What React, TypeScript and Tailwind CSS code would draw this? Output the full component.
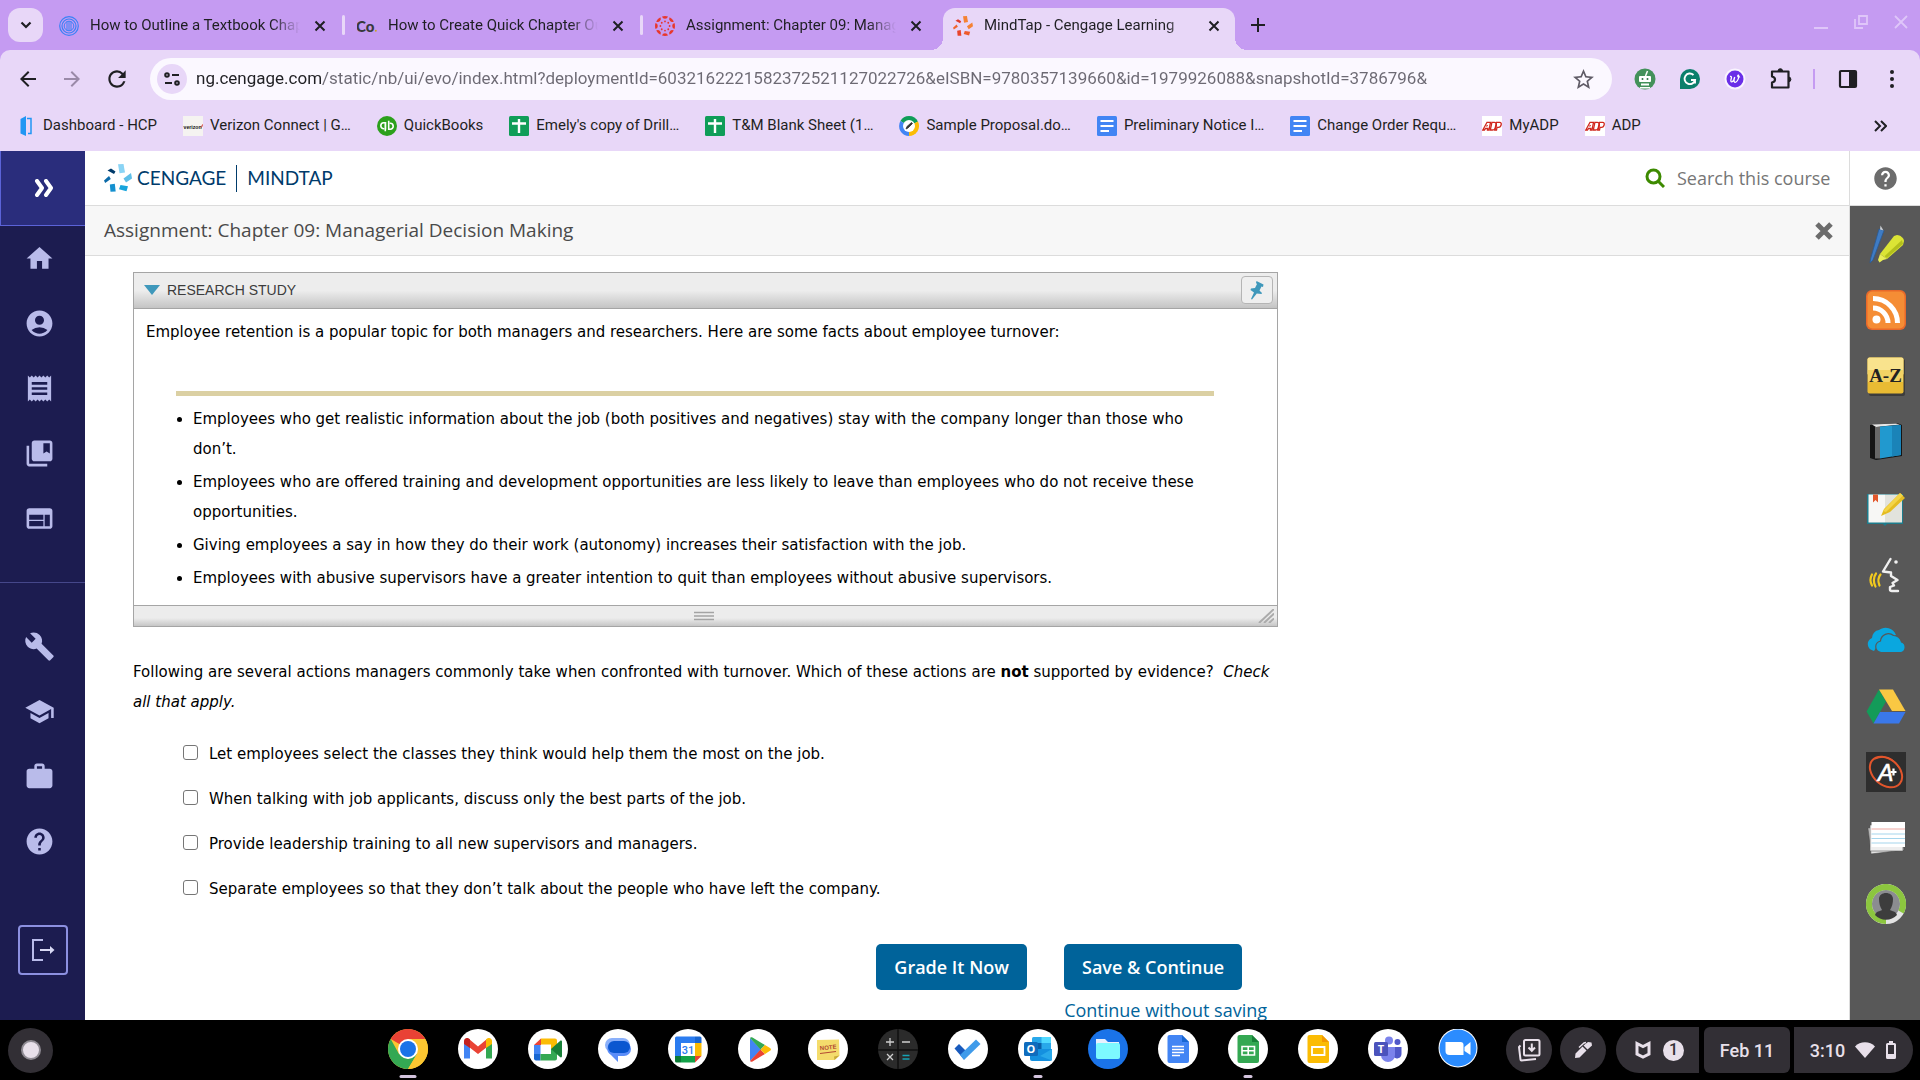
import type { ComponentType, ReactNode } from 'react'
import clsx from 'clsx'
import {
  MdAccountCircle,
  MdArrowBack,
  MdArrowForward,
  MdBuild,
  MdCollectionsBookmark,
  MdHelp,
  MdHome,
  MdReceipt,
  MdRefresh,
  MdSchool,
  MdStarBorder,
  MdWeb,
  MdWork,
} from 'react-icons/md'

interface TabInfo {
  title: string
  icon: ReactNode
  active?: boolean
}

interface Bookmark {
  label: string
  icon: ReactNode
}

interface NavItem {
  label: string
  icon: ComponentType<{ size?: number }>
}

interface AppItem {
  label: string
  icon: ReactNode
  running?: 'focused' | 'open'
}

const URL_TEXT =
  'ng.cengage.com/static/nb/ui/evo/index.html?deploymentId=6032162221582372521127022726&eISBN=9780357139660&id=1979926088&snapshotId=3786796&'

/* ---------- browser icons ---------- */

function OutlineFavicon() {
  return (
    <svg viewBox="0 0 20 20" className="size-5" fill="none" stroke="#3b82f6">
      <circle cx="10" cy="10" r="9.3" strokeWidth="1.2" />
      <circle cx="10" cy="10" r="7" strokeWidth="1.2" />
      <circle cx="10" cy="10" r="4.8" strokeWidth="1" />
      <path d="M8 5.5v9M10 5.2v9.6M12 5.5v9" strokeWidth="1" />
    </svg>
  )
}

function CoFavicon() {
  return (
    <svg viewBox="0 0 20 20" className="size-5">
      <text x="-1" y="15.5" fontFamily="Lato, sans-serif" fontWeight="900" fontSize="15" fill="#38393d">
        Co
      </text>
      <circle cx="18.8" cy="14.8" r="1" fill="#c9a227" />
    </svg>
  )
}

function CanvasFavicon() {
  const angles = [0, 45, 90, 135, 180, 225, 270, 315]
  return (
    <svg viewBox="-10 -10 20 20" className="size-5" fill="#e8372b">
      {angles.map((a) => (
        <g key={a} transform={`rotate(${a})`}>
          <path d="M-3-9.5A10 10 0 0 1 3-9.5A3.1 3.1 0 0 1-3-9.5Z" />
          <circle cx="0" cy="-4.6" r="0.9" />
        </g>
      ))}
    </svg>
  )
}

function CengageMark({ className, colors }: { className: string; colors: string[] }) {
  return (
    <svg viewBox="0 0 28 28" className={className}>
      <path d="M14 0.3l5.500-.3 1.500 8.500-5.500.8z" fill={colors[0]} />
      <path d="M27 9l1 5.500-6 4-2.500-4z" fill={colors[1]} />
      <path d="M16.500 21l7.500 1.200-1.500 5-7.500-2z" fill={colors[2]} />
      <path d="M5.800 20.500l5-.8.9 7.800-5.200.2z" fill={colors[3]} />
      <path d="M0 16.500l5-4.500 1.800 3-5.600 4z" fill={colors[4]} />
      <path d="M3.500 6.500l3.500-2 4.500 3-1.500 2.500z" fill={colors[5]} />
    </svg>
  )
}

function SheetsFavicon() {
  return (
    <svg viewBox="0 0 20 20" className="size-5">
      <rect width="20" height="20" rx="1.5" fill="#0f9d58" />
      <path d="M10 3v14M3 7.500h14" stroke="#fff" strokeWidth="2.400" />
    </svg>
  )
}

function DocsFavicon() {
  return (
    <svg viewBox="0 0 20 20" className="size-5">
      <rect width="20" height="20" rx="1.5" fill="#4285f4" />
      <path d="M3.500 5h13M3.500 10h13M3.500 15h8.500" stroke="#fff" strokeWidth="2" />
    </svg>
  )
}

function HcpFavicon() {
  return (
    <svg viewBox="0 0 20 20" className="size-5">
      <path d="M4.500 3l5.500-3v20l-5.500-2.500z" fill="#2196f3" />
      <path d="M11 2.500h4v15h-3" fill="none" stroke="#2196f3" strokeWidth="1.500" />
    </svg>
  )
}

function VerizonFavicon() {
  return (
    <svg viewBox="0 0 20 20" className="size-5">
      <rect width="20" height="20" fill="#f5f3f1" />
      <text x="0.5" y="12.500" fontFamily="Liberation Sans, sans-serif" fontWeight="700" fontSize="5.200" fill="#111">
        verizon
      </text>
      <path d="M18.500 11.500l1-3" stroke="#d52b1e" />
    </svg>
  )
}

function QuickBooksFavicon() {
  return (
    <svg viewBox="0 0 20 20" className="size-5" fill="none" stroke="#fff" strokeWidth="1.600">
      <circle cx="10" cy="10" r="10" fill="#2ca01c" stroke="none" />
      <path d="M8.500 13.500V6.800H6.800a3 3 0 0 0 0 6h.4M8.300 6.800v8.500" />
      <path d="M11.700 4.700v8.500h1.500a3 3 0 0 0 0-6h-.4" />
    </svg>
  )
}

function ProposalFavicon() {
  return (
    <svg viewBox="0 0 20 20" className="size-5">
      <path d="M10 0a10 10 0 0 1 9 5.600L10 10 1.400 5A10 10 0 0 1 10 0z" fill="#0f9d58" />
      <path d="M19 5.600A10 10 0 0 1 10 20V10z" fill="#fbbc05" />
      <path d="M1.400 5A10 10 0 0 0 10 20V10z" fill="#4285f4" />
      <circle cx="10" cy="10" r="6" fill="#fff" />
      <path d="M7 13l1-2.500 4.500-4 1 1-4.500 4.500z" fill="#333" stroke="#333" strokeWidth=".8" />
    </svg>
  )
}

function AdpFavicon() {
  return (
    <svg viewBox="0 0 20 20" className="size-5">
      <rect width="20" height="20" fill="#fff" />
      <g fill="none" stroke="#d0271d" strokeWidth="1.300">
        <path d="M.8 14L5 6.300h3.500L7 14H5.500l.3-1.500H3.500L2.500 14zM4.500 10.500l1-1.500" />
        <path d="M8.300 14l1.600-7.700h2.600c3.500 0 1.800 7.700-2 7.700z" />
        <path d="M12.800 14l1.600-7.700h3.300c2.600 0 1.700 5-1.200 5H15L14.500 14z" />
      </g>
    </svg>
  )
}

function RobotExtension() {
  return (
    <svg viewBox="0 0 22 22" className="size-[22px]">
      <circle cx="11" cy="11" r="10.500" fill="#43915a" />
      <path d="M11.500 8l2-5" stroke="#fff" strokeWidth="1.500" />
      <rect x="5" y="8" width="12" height="6" rx="1" fill="#fff" />
      <circle cx="8.500" cy="11" r="1" fill="#2f7344" />
      <circle cx="13.500" cy="11" r="1" fill="#2f7344" />
      <path d="M7 15.500h8v2H7zM6 19h10v1.500H6z" fill="#fff" />
    </svg>
  )
}

function GrammarlyExtension() {
  return (
    <svg viewBox="0 0 22 22" className="size-[22px]">
      <path d="M1 11a10 10 0 1 1 10 10H1z" fill="#0b7f6b" />
      <path d="M14.500 7A5.300 5.300 0 1 0 16 12h-4m4 0v3.500" fill="none" stroke="#fff" strokeWidth="1.900" />
    </svg>
  )
}

function WordtuneExtension() {
  return (
    <svg viewBox="0 0 22 22" className="size-[22px]">
      <circle cx="11" cy="11" r="10.500" fill="#f9f4ff" />
      <circle cx="11" cy="11" r="8.500" fill="#6a2ee8" />
      <path
        d="M6 8.500c2-.5 1.500 1.500 1 3-.8 3 1.500 3 2.700.5l1-3c-1.500 4.500-.3 6 1.300 5 2-1.200 3.500-5.500 2.500-6.800-1.300-.5-1 3 1.500 1.500"
        fill="none"
        stroke="#fff"
        strokeWidth="1.300"
      />
    </svg>
  )
}

function PuzzleIcon() {
  return (
    <svg viewBox="0 0 24 24" className="size-6" fill="none" stroke="#1f1f23" strokeWidth="2.200" strokeLinejoin="round">
      <path d="M3 4.500h16.500V20.500H3v-5c4-.8 4-5.200 0-6z" />
      <path d="M9 4a2.300 2.300 0 0 1 4.600 0zM19.500 10a2.400 2.400 0 0 1 0 4.800z" fill="#1f1f23" strokeWidth="1" />
    </svg>
  )
}

const tabs: TabInfo[] = [
  { title: 'How to Outline a Textbook Chapter', icon: <OutlineFavicon /> },
  { title: 'How to Create Quick Chapter Outlines', icon: <CoFavicon /> },
  { title: 'Assignment: Chapter 09: Managerial', icon: <CanvasFavicon /> },
  {
    title: 'MindTap - Cengage Learning',
    icon: (
      <CengageMark className="size-5" colors={['#f58233', '#f58233', '#ee5a2b', '#e8452c', '#f0642e', '#e03a2a']} />
    ),
    active: true,
  },
]

const bookmarks: Bookmark[] = [
  { label: 'Dashboard - HCP', icon: <HcpFavicon /> },
  { label: 'Verizon Connect | G…', icon: <VerizonFavicon /> },
  { label: 'QuickBooks', icon: <QuickBooksFavicon /> },
  { label: "Emely's copy of Drill…", icon: <SheetsFavicon /> },
  { label: 'T&M Blank Sheet (1…', icon: <SheetsFavicon /> },
  { label: 'Sample Proposal.do…', icon: <ProposalFavicon /> },
  { label: 'Preliminary Notice I…', icon: <DocsFavicon /> },
  { label: 'Change Order Requ…', icon: <DocsFavicon /> },
  { label: 'MyADP', icon: <AdpFavicon /> },
  { label: 'ADP', icon: <AdpFavicon /> },
]

function Tab({ title, icon, active }: TabInfo) {
  return (
    <div className="relative w-[298px] px-[3px]">
      <div
        className={clsx(
          'flex h-full items-center pr-[11px] pb-[7px] pl-[10px]',
          active && 'rounded-t-xl bg-[#e8d7f8]',
        )}
      >
        <button type="button" role="tab" aria-selected={!!active} className="flex min-w-0 flex-1 items-center gap-[11px]">
          <span className="shrink-0">{icon}</span>
          <span className="min-w-0 flex-1 overflow-hidden text-left whitespace-nowrap [mask-image:linear-gradient(90deg,#000_calc(100%-28px),transparent)]">
            {title}
          </span>
        </button>
        <button type="button" aria-label={`Close ${title}`} className="ml-[10px] flex size-5 items-center justify-center">
          <svg viewBox="0 0 12 12" className="size-3" stroke="#1f1f23" strokeWidth="2">
            <path d="M1.500 1.500l9 9M10.500 1.500l-9 9" />
          </svg>
        </button>
      </div>
      {active && (
        <>
          <span className="absolute bottom-0 -left-[9px] size-3 bg-[radial-gradient(circle_at_0_0,transparent_12px,#e8d7f8_12px)]" />
          <span className="absolute -right-[9px] bottom-0 size-3 bg-[radial-gradient(circle_at_100%_0,transparent_12px,#e8d7f8_12px)]" />
        </>
      )}
    </div>
  )
}

function TabStrip() {
  return (
    <div className="flex h-[50px] bg-[#c59bf2] pt-2 text-[15px] text-[#1f1f23]">
      <button
        type="button"
        aria-label="Search tabs"
        className="ml-2 flex h-[34px] w-[35px] items-center justify-center rounded-xl bg-[#e8d7f8]"
      >
        <svg viewBox="0 0 12 12" className="size-3" fill="none" stroke="#1f1f23" strokeWidth="2.200">
          <path d="M1.500 3.500L6 8l4.500-4.500" />
        </svg>
      </button>
      <div role="tablist" className="ml-[3px] flex">
        {tabs.map((tab, i) => (
          <div key={tab.title} className="relative flex">
            <Tab {...tab} />
            {i < 2 && <span className="absolute top-[7px] -right-px h-5 w-[3px] rounded-sm bg-[#e8d7f8]" />}
          </div>
        ))}
      </div>
      <button type="button" aria-label="New tab" className="ml-2 flex h-[34px] w-6 items-center justify-center">
        <svg viewBox="0 0 14 14" className="size-[14px]" stroke="#1f1f23" strokeWidth="2">
          <path d="M7 0v14M0 7h14" />
        </svg>
      </button>
      <div className="mr-3 ml-auto flex h-7 items-center gap-[26px]">
        <button type="button" aria-label="Minimize">
          <svg viewBox="0 0 14 14" className="size-[14px]" stroke="#dfc6f9" strokeWidth="2">
            <path d="M0 13h14" />
          </svg>
        </button>
        <button type="button" aria-label="Restore">
          <svg viewBox="0 0 14 14" className="size-[14px]" fill="none" stroke="#dfc6f9" strokeWidth="1.800">
            <path d="M5 1h8v8H5zM1 4v9h8" />
          </svg>
        </button>
        <button type="button" aria-label="Close window">
          <svg viewBox="0 0 14 14" className="size-[14px]" stroke="#dfc6f9" strokeWidth="1.800">
            <path d="M1 1l12 12M13 1L1 13" />
          </svg>
        </button>
      </div>
    </div>
  )
}

function Toolbar() {
  return (
    <div className="bg-[#c59bf2] text-[#1f1f23]">
      <div className="flex h-[101px] flex-col rounded-t-[10px] bg-[#e8d7f8]">
        <div className="flex items-center pt-2 pr-4 pl-4">
          <button type="button" aria-label="Back" className="mr-5">
            <MdArrowBack size={24} />
          </button>
          <button type="button" aria-label="Forward" className="mr-5 text-[#9a8aa8]">
            <MdArrowForward size={24} />
          </button>
          <button type="button" aria-label="Reload" className="mr-5">
            <MdRefresh size={26} />
          </button>
          <div className="flex h-[42px] flex-1 items-center rounded-full bg-[#fbf8ff] pl-[7px]">
            <button
              type="button"
              aria-label="Site information"
              className="flex size-[30px] shrink-0 items-center justify-center rounded-full bg-[#e8d7f8]"
            >
              <svg viewBox="0 0 16 14" className="h-[14px] w-4" fill="none" stroke="#1f1f23" strokeWidth="2">
                <circle cx="3" cy="3" r="1.800" />
                <path d="M8 3h7M1 11h7" />
                <circle cx="13" cy="11" r="1.800" />
              </svg>
            </button>
            <input
              aria-label="Address"
              defaultValue={URL_TEXT}
              className="ml-[9px] min-w-0 flex-1 bg-[linear-gradient(90deg,#1f1f23_126px,#6c6973_126px)] bg-clip-text text-[17px] text-transparent outline-none"
            />
            <button type="button" aria-label="Bookmark this tab" className="mr-4 text-[#5f5b66]">
              <MdStarBorder size={25} />
            </button>
          </div>
          <div className="ml-[22px] flex items-center gap-[23px]">
            <RobotExtension />
            <GrammarlyExtension />
            <WordtuneExtension />
            <PuzzleIcon />
          </div>
          <span className="ml-5 h-5 w-[2px] bg-[#c59bf2]" />
          <button type="button" aria-label="Side panel" className="ml-[23px]">
            <svg viewBox="0 0 20 20" className="size-5">
              <rect x="2" y="2" width="16" height="16" rx="1" fill="none" stroke="#1f1f23" strokeWidth="2.200" />
              <path d="M11 2h7v16h-7z" fill="#1f1f23" />
            </svg>
          </button>
          <button type="button" aria-label="Menu" className="ml-[22px]">
            <svg viewBox="0 0 24 20" className="h-5 w-6" fill="#1f1f23">
              <circle cx="12" cy="3" r="2" />
              <circle cx="12" cy="10" r="2" />
              <circle cx="12" cy="17" r="2" />
            </svg>
          </button>
        </div>
        <div className="flex flex-1 items-center gap-[26px] pr-[33px] pl-4 text-[15px] whitespace-nowrap">
          {bookmarks.map((b) => (
            <a key={b.label} href="#" className="flex items-center gap-[7px]">
              {b.icon}
              {b.label}
            </a>
          ))}
          <button type="button" aria-label="More bookmarks" className="ml-auto">
            <svg viewBox="0 0 14 12" className="h-3 w-[14px]" fill="none" stroke="#1f1f23" strokeWidth="2">
              <path d="M2 1l5 5-5 5M8 1l5 5-5 5" />
            </svg>
          </button>
        </div>
      </div>
    </div>
  )
}

/* ---------- course navigation ---------- */

const courseNav: NavItem[] = [
  { label: 'Home', icon: MdHome },
  { label: 'Account', icon: MdAccountCircle },
  { label: 'Orders', icon: MdReceipt },
  { label: 'Library', icon: MdCollectionsBookmark },
  { label: 'Catalog', icon: MdWeb },
]

const supportNav: NavItem[] = [
  { label: 'Study tools', icon: MdBuild },
  { label: 'College success', icon: MdSchool },
  { label: 'Career center', icon: MdWork },
  { label: 'Help', icon: MdHelp },
]

function NavGroup({ items }: { items: NavItem[] }) {
  return (
    <ul className="flex flex-col gap-[34px] pr-[6px]">
      {items.map(({ label, icon: Icon }) => (
        <li key={label} className="flex justify-center">
          <button type="button" aria-label={label}>
            <Icon size={31} />
          </button>
        </li>
      ))}
    </ul>
  )
}

function Sidebar() {
  return (
    <nav className="flex w-[85px] shrink-0 flex-col bg-[#1c1c50] text-[#b9bbea]">
      <button
        type="button"
        aria-label="Expand navigation"
        className="flex h-[75px] shrink-0 items-center justify-center border-b border-l border-[#5b63d8] bg-[#2a2d7c] pl-[2px]"
      >
        <svg
          viewBox="0 0 20 18"
          className="h-[18px] w-5"
          fill="none"
          stroke="#fff"
          strokeWidth="4"
          strokeLinecap="round"
          strokeLinejoin="round"
        >
          <path d="M3 2l5 7-5 7M12 2l5 7-5 7" />
        </svg>
      </button>
      <div className="border-b border-[#45478a] pt-[17px] pb-12">
        <NavGroup items={courseNav} />
      </div>
      <div className="pt-12">
        <NavGroup items={supportNav} />
      </div>
      <button
        type="button"
        aria-label="Sign out"
        className="mt-[68px] ml-[18px] flex size-[50px] items-center justify-center rounded border-2 border-[#8c90e0]"
      >
        <svg viewBox="0 0 24 24" className="size-6" fill="none" stroke="#d9daf6" strokeWidth="2">
          <path d="M12 2H2v20h10" stroke="#b9bbea" />
          <path d="M9 12h11" />
          <path d="M19 8l4.500 4-4.500 4z" fill="#d9daf6" stroke="none" />
        </svg>
      </button>
    </nav>
  )
}

/* ---------- study tools on the right edge ---------- */

const studyTools: { label: string; art: ReactNode }[] = [
  {
    label: 'Highlights and notes',
    art: (
      <>
        <path d="M13 5l5 1.500L7 36l-3 3 .500-4z" fill="#3f7cc4" stroke="#2a5a96" strokeWidth=".8" />
        <path d="M14.500 1.500l3 5-3.500-1z" fill="#c9cdd2" />
        <path d="M31 11c3 0 7 3 7 6l-1 4-16 14-7-5 14-18z" fill="#dbe435" />
        <path d="M37 20L21 34l-2.500-1.800L36 16z" fill="#b3bf1c" />
        <path d="M14 30l7 5-4 1-3.500 2.500L12 36z" fill="#e9ee55" />
      </>
    ),
  },
  {
    label: 'RSS feed',
    art: (
      <>
        <rect width="40" height="40" rx="6" fill="#e8692a" />
        <rect x="1.500" y="1.500" width="37" height="37" rx="5" fill="#f58d35" />
        <circle cx="10.500" cy="29.500" r="4" fill="#fff" />
        <path d="M7 18a15 15 0 0 1 15 15M7 8.500A24.500 24.500 0 0 1 31.500 33" fill="none" stroke="#fff" strokeWidth="5" />
      </>
    ),
  },
  {
    label: 'Glossary',
    art: (
      <>
        <rect x="3" y="3" width="36" height="37" rx="2" fill="#3c3c3c" />
        <rect x="1.500" y="1.500" width="36" height="36" rx="2" fill="#e9bb33" />
        <rect x="1.500" y="1.500" width="36" height="18" rx="2" fill="#f9e38d" />
        <rect x="2" y="14" width="35" height="12" fill="#f3d364" />
        <text x="19.500" y="26" textAnchor="middle" fontFamily="Liberation Serif, serif" fontWeight="700" fontSize="19" fill="#222">
          A-Z
        </text>
      </>
    ),
  },
  {
    label: 'Book',
    art: (
      <>
        <path d="M4 3l27-2 5 2v31l-26 4-6-2z" fill="#151515" />
        <path d="M6 2.500l24-1 4 1-24 2.500z" fill="#e8e8e8" />
        <path d="M9 5h5v31.500H9z" fill="#686868" />
        <path d="M14 4.500l21-1.500v30l-21 3.500z" fill="#2199cf" />
        <path d="M26 3.700l9-.7v30l-9 1.500z" fill="#1a83b8" />
      </>
    ),
  },
  {
    label: 'Reader notebook',
    art: (
      <>
        <path d="M1 6h36v30H21l-2 2-2-2H1z" fill="#1d7c8c" />
        <path d="M2.500 6.500H19v28H2.500z" fill="#f7f7f5" />
        <path d="M19 6.500h17v28H19z" fill="#e2e3dd" />
        <path d="M7 6.500h5v8L9.500 12 7 14.500z" fill="#e2572b" />
        <path d="M34 5l5 5-15 14-9 4 3-7z" fill="#e5bd22" />
        <path d="M34 5l3 2.500L20 24l-3-1z" fill="#f4d548" />
      </>
    ),
  },
  {
    label: 'Read aloud',
    art: (
      <g fill="none" strokeLinecap="round" strokeLinejoin="round">
        <path d="M24.500 5L17 17.500l8 1v3.500l6.500 4-5 3 1.500 2.500-4 1.500v2.500c0 1 1 1.500 2 1.500h6" stroke="#f0f0f0" strokeWidth="2.400" />
        <circle cx="30" cy="8" r="1.800" fill="#f0f0f0" />
        <path d="M14.500 20.500c-2.500 3-2.500 7.500-1 11M10 19.500c-3 4-2.500 9.500-.5 13M6 20.500c-2 3.500-2 7.500 0 11" stroke="#f2c91e" strokeWidth="2.200" />
      </g>
    ),
  },
  {
    label: 'OneDrive',
    art: (
      <g fill="#0aa7df">
        <path d="M8 31a8 7 0 0 1-2-13 8 8 0 0 1 7-8 11 11 0 0 1 17 5l-14 3z" />
        <path
          d="M15 32.500a7 6 0 0 1-.500-11.500 8 8 0 0 1 13-5.500 8 8 0 0 1 8 6.500 5.500 5.500 0 0 1-.5 10.500z"
          stroke="#585858"
          strokeWidth="1.200"
        />
      </g>
    ),
  },
  {
    label: 'Google Drive',
    art: (
      <>
        <path d="M13 3.500L.5 25.500 7.500 37.500 20 15.500z" fill="#139b59" />
        <path d="M13 3.500h14L39.500 25H26z" fill="#f9c843" />
        <path d="M14 26h25.500L33 37.500H7.500z" fill="#3a78ea" />
      </>
    ),
  },
  {
    label: 'Progress',
    art: (
      <>
        <rect width="40" height="40" fill="#2e2e2e" />
        <g fill="none" stroke="#e2552c" strokeWidth="2">
          <ellipse cx="20" cy="20" rx="18" ry="13" transform="rotate(40 20 20)" />
          <path d="M9 7c8-4 18-2 24 9" strokeWidth="1.200" />
        </g>
        <text x="12" y="29" fontFamily="Liberation Sans, sans-serif" fontSize="23" fontStyle="italic" fill="#fff" stroke="#fff" strokeWidth=".6">
          A
        </text>
        <path d="M24.500 20h6M27.500 16.500v7" stroke="#fff" strokeWidth="2.200" />
      </>
    ),
  },
  {
    label: 'Flashcards',
    art: (
      <>
        <path d="M2 10l32-4 4 26L5 36z" fill="#e2e2e2" stroke="#444" strokeWidth=".6" />
        <path d="M4 7h33v26H4z" fill="#eee" stroke="#555" strokeWidth=".6" />
        <path d="M5.500 4H39v25H5.500z" fill="#fff" />
        <path d="M5.500 11H39" stroke="#efa8a2" />
        <path d="M5.500 16H39M5.500 20.500H39M5.500 25H39" stroke="#a5d5ec" />
      </>
    ),
  },
  {
    label: 'Tutoring',
    art: (
      <>
        <circle cx="20" cy="20" r="17" fill="#8b8c90" stroke="#e4e4e4" strokeWidth="6" />
        <path d="M20 37A17 17 0 1 1 35 28" fill="none" stroke="#8cc63f" strokeWidth="6" />
        <path d="M9 31c1-4 5-3.500 7-5-2-3-3-7-3-11 0-8 14-8 14 0 0 4-1 8-3 11 2 1.500 6 1 7 5a15 15 0 0 1-22 0z" fill="#3d3d3d" />
      </>
    ),
  },
]

function StudyToolRail() {
  return (
    <aside className="flex w-[71px] shrink-0 flex-col border-l border-[#dcdcdc] bg-[#585858]">
      <div className="flex h-[55px] shrink-0 items-center justify-center border-b border-[#dcdcdc] bg-white">
        <button type="button" aria-label="Help" className="text-[#6c6c6c]">
          <MdHelp size={27} />
        </button>
      </div>
      <div className="flex flex-col items-center gap-[26px] pt-[18px] pl-[2px]">
        {studyTools.map((tool) => (
          <button key={tool.label} type="button" aria-label={tool.label}>
            <svg viewBox="0 0 40 40" className="size-10">
              {tool.art}
            </svg>
          </button>
        ))}
      </div>
    </aside>
  )
}

/* ---------- assignment ---------- */

const facts = [
  'Employees who get realistic information about the job (both positives and negatives) stay with the company longer than those who don’t.',
  'Employees who are offered training and development opportunities are less likely to leave than employees who do not receive these opportunities.',
  'Giving employees a say in how they do their work (autonomy) increases their satisfaction with the job.',
  'Employees with abusive supervisors have a greater intention to quit than employees without abusive supervisors.',
]

const choices = [
  'Let employees select the classes they think would help them the most on the job.',
  'When talking with job applicants, discuss only the best parts of the job.',
  'Provide leadership training to all new supervisors and managers.',
  'Separate employees so that they don’t talk about the people who have left the company.',
]

function CourseHeader() {
  return (
    <header className="flex h-[55px] shrink-0 items-center border-b border-[#dcdcdc] pr-[14px] pl-[19px]">
      <CengageMark className="size-7" colors={['#8ad4f5', '#5fbfe8', '#16a4dc', '#1490cf', '#0b6aa8', '#003a6b']} />
      <a href="#" className="ml-[5px] flex items-center text-[19px] text-[#003b6b] [font-family:Lato,sans-serif]">
        CENGAGE
        <span className="mx-[10px] h-[27px] w-px bg-[#003b6b]" />
        MINDTAP
      </a>
      <label className="ml-auto flex items-center gap-3">
        <svg viewBox="0 0 20 20" className="size-5" fill="none" stroke="#3d8a00" strokeWidth="3">
          <circle cx="8.500" cy="8.500" r="6.500" />
          <path d="M13 13l6 6" />
        </svg>
        <input
          type="text"
          aria-label="Search this course"
          placeholder="Search this course"
          className="w-[158px] text-lg outline-none placeholder:text-[#767676]"
        />
      </label>
    </header>
  )
}

function ResearchStudy() {
  return (
    <section className="border border-[#a5a5a5]">
      <div className="flex h-9 items-center border-b border-[#a5a5a5] bg-[linear-gradient(#ededed_50%,#c4c4c4)] pr-1 pb-[2px] pl-[10px]">
        <button
          type="button"
          className="flex items-center gap-[7px] text-sm text-[#3c3c3c] [font-family:'Liberation_Sans',Arial,sans-serif]"
        >
          <svg viewBox="0 0 16 10" className="h-[10px] w-4" fill="#3f98bb">
            <path d="M0 0h16L8 10z" />
          </svg>
          RESEARCH STUDY
        </button>
        <button
          type="button"
          aria-label="Pin panel"
          className="ml-auto flex h-7 w-8 items-center justify-center rounded border border-[#b5b5b5] bg-[#efefef]"
        >
          <svg viewBox="0 0 14 20" className="h-5 w-[14px]" fill="#3f98bb">
            <path d="M6.500 1l7 3.500-.5 2.500-1.500-.500-2 4 2.500 2.500-.5 1-4.700-.5L2 19.500l-1-.5 3-6.500L.5 10 1 8.500l4-.500 2-4L6 3z" />
          </svg>
        </button>
      </div>
      <div className="pt-2 pr-3 pb-3 pl-3">
        <p>Employee retention is a popular topic for both managers and researchers. Here are some facts about employee turnover:</p>
        <div className="mt-11 mr-[51px] ml-[30px] border-t-[5px] border-[#dbd0a3] pt-2">
          <ul className="flex list-disc flex-col gap-[3px] pl-[17px]">
            {facts.map((fact) => (
              <li key={fact}>{fact}</li>
            ))}
          </ul>
        </div>
      </div>
      <div className="grid h-[21px] grid-cols-[1fr_auto_1fr] items-center border-t border-[#a5a5a5] bg-[linear-gradient(#ececec_60%,#c6c6c6)] pr-[3px]">
        <span />
        <svg viewBox="0 0 20 10" className="h-[10px] w-5" stroke="#a3a3a3" strokeWidth="1.500">
          <path d="M0 1.500h20M0 5h20M0 8.500h20" />
        </svg>
        <svg viewBox="0 0 16 14" className="h-[14px] w-4 justify-self-end" stroke="#ababab" strokeWidth="2">
          <path d="M1 14L16 0M6 14l10-9.500M11 14l5-4.500" />
        </svg>
      </div>
    </section>
  )
}

function Question() {
  return (
    <form className="w-[1145px] max-w-full" onSubmit={(e) => e.preventDefault()}>
      <ResearchStudy />
      <fieldset className="pt-[30px]">
        <legend className="float-left mb-[22px]">
          Following are several actions managers commonly take when confronted with turnover. Which of these actions are{' '}
          <b>not</b> supported by evidence?&nbsp; <i>Check all that apply.</i>
        </legend>
        <div className="clear-both flex flex-col gap-[15px] pl-[50px]">
          {choices.map((choice) => (
            <label key={choice} className="flex items-center gap-[11px]">
              <input
                type="checkbox"
                className="mb-1 size-[15px] appearance-none rounded-[3px] border border-[#767676] bg-white"
              />
              {choice}
            </label>
          ))}
        </div>
      </fieldset>
      <div className="mt-10 mr-[11px] flex items-start justify-end gap-[37px] text-lg leading-[30px] [font-family:'Open_Sans',sans-serif]">
        <button type="submit" className="h-[46px] w-[151px] rounded-[5px] bg-[#00639a] font-semibold text-white">
          Grade It Now
        </button>
        <div className="flex flex-col items-start">
          <button type="button" className="h-[46px] w-[178px] rounded-[5px] bg-[#00639a] font-semibold text-white">
            Save &amp; Continue
          </button>
          <a href="#" className="mt-[5px] text-[#00639a]">
            Continue without saving
          </a>
        </div>
      </div>
    </form>
  )
}

function Assignment() {
  return (
    <main className="flex min-w-0 flex-1 flex-col overflow-hidden bg-white [font-family:'Open_Sans',sans-serif]">
      <CourseHeader />
      <div className="flex h-[50px] shrink-0 items-center justify-between border-b border-[#dcdcdc] bg-[#f7f7f7] pr-4 pl-[19px]">
        <h1 className="text-[19px] text-[#4a4a4a]">Assignment: Chapter 09: Managerial Decision Making</h1>
        <button type="button" aria-label="Close assignment">
          <svg viewBox="0 0 18 18" className="size-[18px]" stroke="#6c6c6c" strokeWidth="5">
            <path d="M2 2l14 14M16 2L2 16" />
          </svg>
        </button>
      </div>
      <div className="pt-4 pl-12 text-[15px] leading-[30px] text-black [font-family:Verdana,'DejaVu_Sans',sans-serif]">
        <Question />
      </div>
    </main>
  )
}

/* ---------- shelf ---------- */

const white = <circle cx="20" cy="20" r="20" fill="#fff" />

const shelfApps: AppItem[] = [
  {
    label: 'Chrome',
    running: 'focused',
    icon: (
      <>
        <circle cx="20" cy="20" r="20" fill="#fbc631" />
        <path d="M20 20L2.700 10A20 20 0 0 1 37.300 10z" fill="#e94235" />
        <path d="M2.700 10A20 20 0 0 0 20 40l9-15-9 5-9-5z" fill="#34a853" />
        <path d="M37.300 10H20v10l9 5-9 15A20 20 0 0 0 37.300 10z" fill="#fbc631" />
        <circle cx="20" cy="20" r="10" fill="#fff" />
        <circle cx="20" cy="20" r="8" fill="#1a73e8" />
      </>
    ),
  },
  {
    label: 'Gmail',
    icon: (
      <>
        {white}
        <path d="M6 13v16.500h6V15z" fill="#4285f4" />
        <path d="M28 15v14.500h6V13z" fill="#34a853" />
        <path d="M11 10l9 7.500 9-7.500v8l-9 7-9-7z" fill="#ea4335" />
        <path d="M28 10.500c3-3 6-1 6 1.500v3l-6 4z" fill="#fbbc04" />
        <path d="M12 10.500c-3-3-6-1-6 1.500v3l6 4z" fill="#c5221f" />
      </>
    ),
  },
  {
    label: 'Meet',
    icon: (
      <>
        {white}
        <path d="M6 16l7-6.500V16z" fill="#ea4335" />
        <path d="M6 16h6.500v9H6z" fill="#4285f4" />
        <path d="M6 25h6.500v6.500H8a2 2 0 0 1-2-2z" fill="#1967d2" />
        <path d="M13 9.500h14a2 2 0 0 1 2 2V20h-6v-4.500H13z" fill="#fbbc04" />
        <path d="M12.500 25H23v-5h6v9.500a2 2 0 0 1-2 2H12.500z" fill="#34a853" />
        <path d="M23 20l9-8c1-.8 2-.3 2 1v14c0 1.300-1 1.800-2 1z" fill="#188038" />
      </>
    ),
  },
  {
    label: 'Messages',
    icon: (
      <>
        {white}
        <path d="M14 9h11a7 7 0 0 1 0 14H14A7 7 0 0 1 14 9z" fill="#8ab0fa" />
        <path d="M15 13h11a7 7 0 0 1 0 14h-6v6l-7-7a7 7 0 0 1 2-13z" fill="#5b8df8" />
        <rect x="10" y="12" width="22" height="12" rx="6" fill="#0b57d0" />
      </>
    ),
  },
  {
    label: 'Calendar',
    icon: (
      <>
        {white}
        <path d="M7 9a1.500 1.500 0 0 1 1.500-1.500H27v6.500H13v14H7z" fill="#2b7cf0" />
        <path d="M27 7.500h5A1.500 1.500 0 0 1 33.500 9v5H27z" fill="#1967d2" />
        <path d="M27 14h6.500v13H27z" fill="#fbbc04" />
        <path d="M13 27h14v6.500H13z" fill="#12a148" />
        <path d="M7 27h6v6.500H8.500A1.500 1.500 0 0 1 7 32z" fill="#0b7a35" />
        <path d="M27 27h6.500L27 33.500z" fill="#ea4335" />
        <text x="20" y="25" textAnchor="middle" fontFamily="Roboto, sans-serif" fontWeight="500" fontSize="11" fill="#2b7cf0">
          31
        </text>
      </>
    ),
  },
  {
    label: 'Play Store',
    icon: (
      <>
        {white}
        <path d="M12 9v23l11-11.500z" fill="#4285f4" />
        <path d="M12 9c.5-1 1.500-1 2.500-.4L27 16l-4.500 4.500z" fill="#34a853" />
        <path d="M12 32c.5 1 1.500 1 2.500.4L27 25l-4.500-4.500z" fill="#ea4335" />
        <path d="M27 16l5 3c1.300.8 1.300 2 0 2.800L27 25l-4.500-4.500z" fill="#fbbc04" />
      </>
    ),
  },
  {
    label: 'Notes',
    icon: (
      <>
        {white}
        <path d="M9 11l22-.5.5 16-5 4.500H9z" fill="#f4dc6c" />
        <path d="M31.500 26.500l-5 4.500-.5-3.500z" fill="#c9ab35" />
        <text x="12" y="20.500" fontFamily="Liberation Sans, sans-serif" fontWeight="700" fontSize="6" fill="#b34a32" transform="rotate(-6 20 20)">
          NOTE
        </text>
        <path d="M12 24.500l16-2" stroke="#b34a32" />
      </>
    ),
  },
  {
    label: 'Calculator',
    icon: (
      <>
        <circle cx="20" cy="20" r="20" fill="#2b2b2b" />
        <path d="M20 0v40M0 21h40" stroke="#111" strokeWidth="1.500" />
        <g stroke="#cfcfcf" strokeWidth="1.300">
          <path d="M8 13h8M12 9v8M24 13h8M9 25l6 6M15 25l-6 6" />
        </g>
        <path d="M24.500 26.500h7M24.500 30h7" stroke="#16a3b5" strokeWidth="1.500" />
      </>
    ),
  },
  {
    label: 'To Do',
    icon: (
      <>
        {white}
        <path d="M6.500 19.500l4.500-4.500 9 9-4 6.500z" fill="#185abd" />
        <path d="M28 10.500l4.500 4.500L16 31l-4-5z" fill="#3f9bea" />
      </>
    ),
  },
  {
    label: 'Outlook',
    running: 'open',
    icon: (
      <>
        {white}
        <rect x="14" y="8" width="19" height="18" rx="1.500" fill="#28a8ea" />
        <path d="M14 14h9.500v6H14z" fill="#0a5ea8" />
        <path d="M23.500 8H33v6h-9.500z" fill="#50d9ff" />
        <path d="M12 20l22 0v10a2 2 0 0 1-2 2H14a2 2 0 0 1-2-2z" fill="#1490df" />
        <path d="M34 20L22 27l12 4.500z" fill="#28a8ea" />
        <rect x="6" y="13" width="14" height="14" rx="1.500" fill="#0f6cbd" />
        <text x="13" y="24" textAnchor="middle" fontFamily="Open Sans, sans-serif" fontWeight="700" fontSize="11" fill="#fff">
          O
        </text>
      </>
    ),
  },
  {
    label: 'Files',
    icon: (
      <>
        <circle cx="20" cy="20" r="20" fill="#1a73e8" />
        <path d="M8 10h9l3 3h11v4H8z" fill="#e8f0fe" />
        <rect x="8" y="14" width="24" height="16" rx="2" fill="#7df9ff" />
      </>
    ),
  },
  {
    label: 'Docs',
    icon: (
      <>
        {white}
        <path d="M9.500 8A2 2 0 0 1 11.500 6H24l7 7v19a2 2 0 0 1-2 2H11.500a2 2 0 0 1-2-2z" fill="#4285f4" />
        <path d="M24 6l7 7h-7z" fill="#1967d2" />
        <path d="M14 17.500h12M14 20.500h12M14 23.500h12M14 26.500h8" stroke="#fff" strokeWidth="1.500" />
      </>
    ),
  },
  {
    label: 'Sheets',
    running: 'open',
    icon: (
      <>
        {white}
        <path d="M9.500 8A2 2 0 0 1 11.500 6H24l7 7v19a2 2 0 0 1-2 2H11.500a2 2 0 0 1-2-2z" fill="#34a853" />
        <path d="M24 6l7 7h-7z" fill="#188038" />
        <path d="M14 17.500h12.500v8.500H14zM20.200 17.500v8.500M14 21.800h12.500" fill="none" stroke="#fff" strokeWidth="1.600" />
      </>
    ),
  },
  {
    label: 'Slides',
    icon: (
      <>
        {white}
        <path d="M9.500 8A2 2 0 0 1 11.500 6H24l7 7v19a2 2 0 0 1-2 2H11.500a2 2 0 0 1-2-2z" fill="#fbbc04" />
        <path d="M24 6l7 7h-7z" fill="#f29900" />
        <path d="M14 18h12.500v8H14z" fill="none" stroke="#fff" strokeWidth="1.800" />
      </>
    ),
  },
  {
    label: 'Teams',
    icon: (
      <>
        {white}
        <circle cx="21" cy="11.500" r="4" fill="#7b83eb" />
        <circle cx="29.500" cy="13" r="3" fill="#5059c9" />
        <path d="M25 18h8.500v7a4.500 4.500 0 0 1-8.500 2z" fill="#5059c9" />
        <path d="M13 18h14v8a7 7 0 0 1-14 0z" fill="#7b83eb" />
        <rect x="6" y="13" width="14" height="14" rx="1.500" fill="#4b53bc" />
        <text x="13" y="24" textAnchor="middle" fontFamily="Open Sans, sans-serif" fontWeight="700" fontSize="11" fill="#fff">
          T
        </text>
      </>
    ),
  },
  {
    label: 'Zoom',
    icon: (
      <>
        <circle cx="20" cy="19" r="19.500" fill="#fff" />
        <circle cx="20" cy="19" r="18.500" fill="#2b8cff" />
        <path d="M7.500 13h15a3 3 0 0 1 3 3v10h-14a4 4 0 0 1-4-4z" fill="#fff" />
        <path d="M26.500 18l6-5v13l-6-4z" fill="#fff" />
      </>
    ),
  },
]

function Shelf() {
  return (
    <footer className="flex h-[60px] shrink-0 items-center bg-black pr-[7px] pl-2 text-[#e8e0ea]">
      <button
        type="button"
        aria-label="Launcher"
        className="flex size-[45px] items-center justify-center rounded-full bg-[#322f35]"
      >
        <span className="size-5 rounded-full border-2 border-[#8f8b93] bg-[#e8e0ea]" />
      </button>
      <div className="ml-auto flex items-center gap-[30px]">
        {shelfApps.map((app) => (
          <button key={app.label} type="button" aria-label={app.label} className="relative pb-[2px]">
            <svg viewBox="0 0 40 40" className="size-10">
              {app.icon}
            </svg>
            {app.running && (
              <span
                className={clsx(
                  'absolute top-[46px] left-1/2 h-[3px] -translate-x-1/2 rounded-full bg-[#d3c3dd]',
                  app.running === 'focused' ? 'w-[17px]' : 'w-[9px]',
                )}
              />
            )}
          </button>
        ))}
      </div>
      <div className="ml-7 flex h-[46px] items-stretch text-[18px] font-medium">
        <button
          type="button"
          aria-label="Downloads"
          className="mr-2 flex w-[46px] items-center justify-center rounded-full bg-[#322f35]"
        >
          <svg viewBox="0 0 24 24" className="size-6" fill="none" stroke="#e8e0ea" strokeWidth="2">
            <rect x="7" y="2" width="15.500" height="15.500" rx="1.500" />
            <path d="M3.500 7.500L2 9l1.500 12.500a1 1 0 0 0 1 1L19 21" />
            <path d="M14.800 5.500v6M11.500 9.500l3.300 3.300L18 9.500" />
          </svg>
        </button>
        <button
          type="button"
          aria-label="Stylus tools"
          className="mr-[10px] flex w-[46px] items-center justify-center rounded-full bg-[#322f35]"
        >
          <svg viewBox="0 0 20 20" className="size-5" fill="#e8e0ea">
            <path d="M2 18l.5-4.500 7-7 4 4-7 7zM10.500 5.500L15 2l3.500.5.500 3-4.500 4z" />
            <path d="M6 7.500L11 3l2-.5" fill="none" stroke="#e8e0ea" strokeWidth="1.500" />
          </svg>
        </button>
        <button
          type="button"
          aria-label="1 notification"
          className="mr-[5px] flex w-[83px] items-center justify-center gap-3 rounded-l-full rounded-r-md bg-[#322f35] pl-1"
        >
          <svg viewBox="0 0 16 18" className="h-[18px] w-4" fill="none" stroke="#e8e0ea" strokeWidth="3">
            <path d="M2 2.500l6 3 6-3v10.500l-6 3-6-3z" />
          </svg>
          <span className="flex size-[21px] items-center justify-center rounded-full bg-[#e8e0ea] text-base text-[#322f35]">1</span>
        </button>
        <button type="button" className="mr-1 w-[86px] rounded-md bg-[#322f35]">
          Feb 11
        </button>
        <button
          type="button"
          className="flex w-[119px] items-center justify-center gap-[10px] rounded-l-md rounded-r-full bg-[#322f35]"
        >
          3:10
          <svg viewBox="0 0 20 16" className="h-4 w-5" fill="#e8e0ea">
            <path d="M0 4.500a14 14 0 0 1 20 0L10 16z" />
          </svg>
          <svg viewBox="0 0 12 18" className="h-[18px] w-3">
            <path d="M4 0h4v3H4z" fill="#e8e0ea" />
            <rect x="2" y="3" width="8" height="14" rx=".5" fill="none" stroke="#e8e0ea" strokeWidth="2" />
            <path d="M2 13h8v4H2z" fill="#e8e0ea" />
          </svg>
        </button>
      </div>
    </footer>
  )
}

export default function App() {
  return (
    <div className="flex h-screen flex-col overflow-hidden [font-family:Roboto,sans-serif]">
      <TabStrip />
      <Toolbar />
      <div className="flex min-h-0 flex-1">
        <Sidebar />
        <Assignment />
        <StudyToolRail />
      </div>
      <Shelf />
    </div>
  )
}
